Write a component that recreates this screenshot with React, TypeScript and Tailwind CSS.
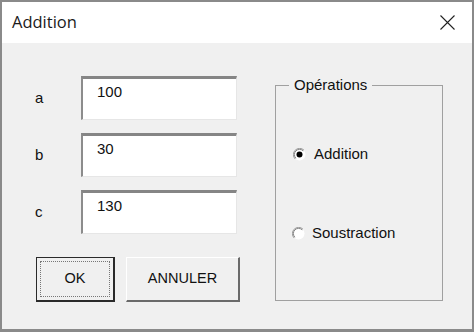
import React from 'react';

const Radio = ({ checked }: { checked: boolean }) => (
  <svg width="13" height="13" viewBox="0 0 13 13" className="shrink-0">
    <circle cx="6.5" cy="6.5" r="6" fill="#ffffff" />
    <path d="M11 2.2 A6 6 0 1 0 2.2 11" fill="none" stroke="#9a9a9a" strokeWidth="1" />
    <path d="M10.2 2.9 A5 5 0 1 0 2.9 10.2" fill="none" stroke="#6a6a6a" strokeWidth="0.8" />
    {checked && <circle cx="6.5" cy="6.5" r="3" fill="#000000" />}
  </svg>
);

const Field = ({ label, value }: { label: string; value: string }) => (
  <div className="flex items-center h-[44px]">
    <span className="w-[46px] text-[15px]">{label}</span>
    <div className="w-[156px] h-[44px] bg-white border-t-[3px] border-l-2 border-r border-b border-t-[#858585] border-l-[#8c8c8c] border-r-[#e6e6e6] border-b-[#e6e6e6] pl-[14px] pt-[4px] text-[15px] leading-[18px]">
      {value}
    </div>
  </div>
);

export default function App() {
  return (
    <div
      className="w-[474px] h-[332px] border-2 border-b-[3px] border-[#8a8a8a] bg-[#f0f0f0] flex flex-col text-[#111]"
      style={{ fontFamily: '"Liberation Sans", Arial, sans-serif' }}
    >
      <div className="h-[41px] bg-white flex items-center justify-between pl-[10px] pr-[17px] shrink-0">
        <span className="text-[16.5px] text-[#1a1a1a]" style={{ fontFamily: '"Open Sans", sans-serif' }}>
          Addition
        </span>
        <svg width="15" height="15" viewBox="0 0 15 15">
          <path d="M0.5 0.5 L14.5 14.5 M14.5 0.5 L0.5 14.5" stroke="#222" strokeWidth="1.1" />
        </svg>
      </div>

      <div className="flex flex-1">
        <div className="flex flex-col pl-[33px] pt-[33px]">
          <div className="flex flex-col gap-[13px]">
            <Field label="a" value="100" />
            <Field label="b" value="30" />
            <Field label="c" value="130" />
          </div>
          <div className="flex gap-[11px] mt-[23px]">
            <button className="w-[79px] h-[45px] ml-[1px] border border-r-2 border-b-2 border-[#2a2a2a] bg-[#f0f0f0] p-[3px]">
              <div className="w-full h-full border border-dotted border-[#777] flex items-center justify-center text-[14.5px]">
                OK
              </div>
            </button>
            <button className="w-[114px] h-[45px] border-t border-l border-r-2 border-b-2 border-t-white border-l-white border-r-[#6a6a6a] border-b-[#6a6a6a] bg-[#f0f0f0] flex items-center justify-center text-[14.5px]">
              ANNULER
            </button>
          </div>
        </div>

        <fieldset className="ml-[35px] mt-[32px] w-[168px] h-[226px] border border-[#a0a0a0] pl-[16px]">
          <legend className="-ml-[3px] px-[5px] text-[15px] leading-[20px]">Opérations</legend>
          <div className="flex items-center h-[20px] mt-[49px] ml-[1px] gap-[8px] text-[15px]">
            <Radio checked />
            <span>Addition</span>
          </div>
          <div className="flex items-center h-[20px] mt-[59px] gap-[7px] text-[15px]">
            <Radio checked={false} />
            <span>Soustraction</span>
          </div>
        </fieldset>
      </div>
    </div>
  );
}
